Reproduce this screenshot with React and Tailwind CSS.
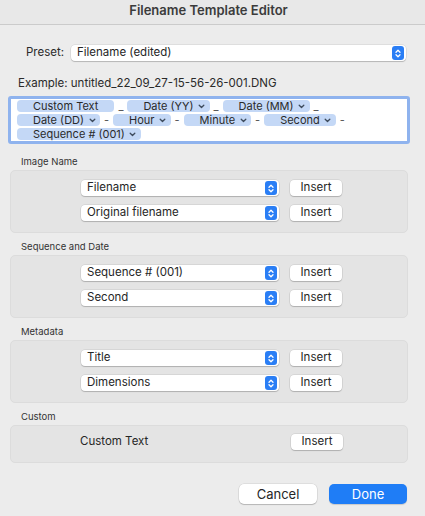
import React from 'react';

const font = { fontFamily: 'Inter, "Noto Sans", sans-serif' };

const Stepper = () => (
  <span className="flex h-[14px] w-[12px] items-center justify-center rounded-[3px] bg-[#2a7ef5]">
    <svg width="6" height="9" viewBox="0 0 6 9" fill="none" stroke="white" strokeWidth="1.3" strokeLinecap="round" strokeLinejoin="round">
      <path d="M1 3.2 L3 1.2 L5 3.2" />
      <path d="M1 5.8 L3 7.8 L5 5.8" />
    </svg>
  </span>
);

const Chevron = () => (
  <svg width="7" height="5" viewBox="0 0 7 5" fill="none" stroke="#3d4a5c" strokeWidth="1.3" strokeLinecap="round" strokeLinejoin="round">
    <path d="M1.2 1.2 L3.5 3.5 L5.8 1.2" />
  </svg>
);

const Token = ({ label, menu = true }) => (
  <span className="flex h-[12px] items-center rounded-[4px] bg-[#c4d8f6] pl-[16px] pr-[4px] text-[11px] leading-none text-[#2a2a2a]">
    {label}
    <span className="ml-[4px] flex w-[8px] justify-center">{menu && <Chevron />}</span>
  </span>
);

const Sep = ({ c }) => (
  <span className="mx-[4px] text-[11px] leading-none text-[#555]">{c}</span>
);

const Select = ({ label, className = '' }) => (
  <div className={`flex h-[16px] items-center justify-between rounded-[4px] bg-white pl-[6px] pr-[2px] shadow-[0_0_0_0.5px_rgba(0,0,0,0.12),0_1px_1px_rgba(0,0,0,0.18)] ${className}`}>
    <span className="text-[11.5px] leading-none text-[#262626]">{label}</span>
    <Stepper />
  </div>
);

const Insert = () => (
  <button className="flex h-[16px] w-[52px] items-center justify-center rounded-[4px] bg-white text-[11.5px] leading-none text-[#262626] shadow-[0_0_0_0.5px_rgba(0,0,0,0.12),0_1px_1px_rgba(0,0,0,0.18)]">
    Insert
  </button>
);

const Section = ({ title, rows, top = 'mt-[8px]' }) => (
  <div>
    <div className={`${top} mb-[3px] pl-[11px] text-[9.5px] leading-[11px] text-[#333]`}>{title}</div>
    <div className="flex flex-col gap-[9px] rounded-[5px] border border-[#dcdcdc] bg-[#e4e4e4] pt-[9px] pb-[11px]">
      {rows.map((r) => (
        <div key={r} className="flex items-center pl-[70px]">
          <Select label={r} className="w-[198px]" />
          <div className="ml-[11px] -mt-[1px]">
            <Insert />
          </div>
        </div>
      ))}
    </div>
  </div>
);

export default function App() {
  return (
    <div style={font} className="h-[516px] w-[425px] overflow-hidden bg-[#ececec]">
      <div className="flex h-[25px] items-start justify-center border-b border-[#cbcbcb] bg-[#e8e8e8] pt-[3px]">
        <span className="pr-[8px] text-[13px] font-semibold leading-[15px] text-[#3b3b3b]">Filename Template Editor</span>
      </div>

      <div className="ml-[10px] w-[398px]">
        <div className="mt-[20px] flex items-center">
          <span className="w-[54px] text-right text-[11.5px] leading-none text-[#2a2a2a]">Preset:</span>
          <Select label="Filename (edited)" className="ml-[7px] w-[335px]" />
        </div>

        <div className="mt-[16px] pl-[8px] text-[11.5px] leading-[13px] text-[#2a2a2a]">
          Example: untitled_22_09_27-15-56-26-001.DNG
        </div>

        <div className="-ml-[2px] mt-[6px] w-[402px] rounded-[3px] border-[3px] border-[#8fb3ee] bg-white">
          <div className="flex flex-col gap-[2px] px-[6px] pt-[1px] pb-[1px]">
            <div className="flex items-center">
              <Token label="Custom Text" menu={false} />
              <Sep c="_" />
              <Token label="Date (YY)" />
              <Sep c="_" />
              <Token label="Date (MM)" />
              <Sep c="_" />
            </div>
            <div className="flex items-center">
              <Token label="Date (DD)" />
              <Sep c="-" />
              <Token label="Hour" />
              <Sep c="-" />
              <Token label="Minute" />
              <Sep c="-" />
              <Token label="Second" />
              <Sep c="-" />
            </div>
            <div className="flex items-center">
              <Token label="Sequence # (001)" />
            </div>
          </div>
        </div>

        <Section title="Image Name" top="mt-[12px]" rows={['Filename', 'Original filename']} />
        <Section title="Sequence and Date" rows={['Sequence # (001)', 'Second']} />
        <Section title="Metadata" rows={['Title', 'Dimensions']} />

        <div>
          <div className="mt-[8px] mb-[3px] pl-[11px] text-[9.5px] leading-[11px] text-[#333]">Custom</div>
          <div className="flex items-center rounded-[5px] border border-[#dcdcdc] bg-[#e4e4e4] pt-[8px] pb-[12px] pl-[69px]">
            <span className="w-[211px] text-[11.5px] leading-none text-[#262626]">Custom Text</span>
            <Insert />
          </div>
        </div>

        <div className="mt-[21px] flex justify-end gap-[12px] pr-[1px]">
          <button className="flex h-[20px] w-[78px] items-center justify-center rounded-[5px] bg-white text-[13px] leading-none text-[#262626] shadow-[0_0_0_0.5px_rgba(0,0,0,0.12),0_1px_1px_rgba(0,0,0,0.18)]">
            Cancel
          </button>
          <button className="flex h-[20px] w-[78px] items-center justify-center rounded-[5px] bg-[#1f7df6] text-[13px] leading-none text-white shadow-[0_1px_1px_rgba(0,0,0,0.15)]">
            Done
          </button>
        </div>
      </div>
    </div>
  );
}
